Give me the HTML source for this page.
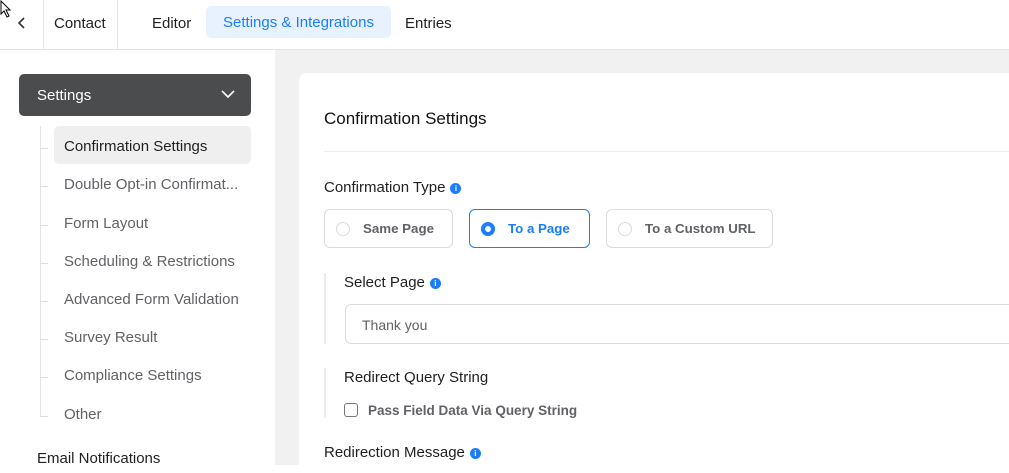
<!DOCTYPE html>
<html><head><style>
*{box-sizing:border-box;margin:0;padding:0}
body{width:1009px;height:465px;overflow:hidden;font-family:"Liberation Sans",sans-serif;background:#fff;position:relative;color:#1e1f21}
.a{position:absolute;white-space:nowrap}
.info{display:inline-block;width:11px;height:11px;border-radius:50%;background:#1a7efb;color:#fff;font-size:8px;font-weight:bold;text-align:center;line-height:11px;vertical-align:1px;margin-left:5px}
.item{position:absolute;left:64px;font-size:15px;color:#606266}
.tick{position:absolute;left:40px;width:8px;height:1px;background:#ddd}
.radio{position:absolute;top:209px;height:39px;border:1px solid #dadbdd;border-radius:6px;font-size:13.3px;font-weight:bold;color:#606266;padding-left:38px;line-height:38px}
.radio i{position:absolute;left:11px;top:12px;width:14px;height:14px;border:1px solid #dadbdd;border-radius:50%}
</style></head><body>
<div class="a" style="left:0;top:49px;width:1009px;height:1px;background:#e5e5e5"></div>
<div class="a" style="left:43px;top:0;width:1px;height:49px;background:#e5e5e5"></div>
<div class="a" style="left:117px;top:0;width:1px;height:49px;background:#e5e5e5"></div>
<svg class="a" style="left:17px;top:16px" width="10" height="14"><path d="M7 2 L2 7 L7 12" stroke="#333" stroke-width="1.6" fill="none"/></svg>
<svg class="a" style="left:0;top:0" width="12" height="18"><path d="M1 1 L1 14 L4 11 L7 17 L9 16 L6 10 L10 10 Z" fill="#fff" stroke="#000" stroke-width="1"/></svg>
<div class="a" style="left:54px;top:15px;font-size:15px">Contact</div>
<div class="a" style="left:152px;top:15px;font-size:15px">Editor</div>
<div class="a" style="left:206px;top:6px;width:185px;height:32px;background:#e8f2fe;border-radius:5px;color:#1a7efb;font-size:15px;text-align:center;line-height:33px">Settings &amp; Integrations</div>
<div class="a" style="left:405px;top:15px;font-size:15px">Entries</div>

<div class="a" style="left:275px;top:50px;width:734px;height:415px;background:#f1f1f1"></div>
<div class="a" style="left:299px;top:73px;width:720px;height:400px;background:#fff;border-radius:8px"></div>

<div class="a" style="left:19px;top:74px;width:232px;height:42px;background:#4b4c4d;border-radius:5px;color:#fff;font-size:15px;line-height:43px;padding-left:18px">Settings</div>
<svg class="a" style="left:221px;top:90px" width="14" height="9"><path d="M1 1 L7 7 L13 1" stroke="#fff" stroke-width="1.6" fill="none"/></svg>
<div class="a" style="left:40px;top:126px;width:1px;height:290px;background:#e3e3e3"></div>
<div class="a" style="left:54px;top:126px;width:197px;height:38px;background:#efefef;border-radius:5px"></div>
<div class="item" style="top:138px;color:#1e1f21">Confirmation Settings</div>
<div class="item" style="top:176px">Double Opt-in Confirmat...</div>
<div class="item" style="top:215px">Form Layout</div>
<div class="item" style="top:253px">Scheduling &amp; Restrictions</div>
<div class="item" style="top:291px">Advanced Form Validation</div>
<div class="item" style="top:329px">Survey Result</div>
<div class="item" style="top:367px">Compliance Settings</div>
<div class="item" style="top:406px">Other</div>
<div class="tick" style="top:148px"></div><div class="tick" style="top:186px"></div><div class="tick" style="top:225px"></div><div class="tick" style="top:263px"></div><div class="tick" style="top:301px"></div><div class="tick" style="top:339px"></div><div class="tick" style="top:377px"></div><div class="tick" style="top:416px"></div>
<div class="a" style="left:37px;top:450px;font-size:15px">Email Notifications</div>

<div class="a" style="left:324px;top:109px;font-size:17px;color:#111">Confirmation Settings</div>
<div class="a" style="left:324px;top:151px;width:685px;height:1px;background:#ececec"></div>
<div class="a" style="left:324px;top:179px;font-size:15px">Confirmation Type<span class="info">i</span></div>
<div class="radio" style="left:324px;width:129px">Same Page<i></i></div>
<div class="radio" style="left:469px;width:121px;border-color:#1a7efb;color:#1a7efb">To a Page<i style="border:4px solid #1a7efb;background:#fff"></i></div>
<div class="radio" style="left:606px;width:167px">To a Custom URL<i></i></div>
<div class="a" style="left:324px;top:273px;width:2px;height:71px;background:#ececec"></div>
<div class="a" style="left:344px;top:274px;font-size:15px">Select Page<span class="info">i</span></div>
<div class="a" style="left:345px;top:304px;width:680px;height:40px;border:1px solid #dadbdd;border-radius:6px;font-size:14px;color:#606266;padding-left:16px;line-height:40px">Thank you</div>
<div class="a" style="left:324px;top:368px;width:2px;height:50px;background:#ececec"></div>
<div class="a" style="left:344px;top:369px;font-size:15px">Redirect Query String</div>
<div class="a" style="left:344px;top:403px;width:14px;height:14px;border:1px solid #777;border-radius:3px"></div>
<div class="a" style="left:368px;top:403px;font-size:13.5px;font-weight:bold;color:#606266">Pass Field Data Via Query String</div>
<div class="a" style="left:324px;top:444px;font-size:15px">Redirection Message<span class="info">i</span></div>
</body></html>
